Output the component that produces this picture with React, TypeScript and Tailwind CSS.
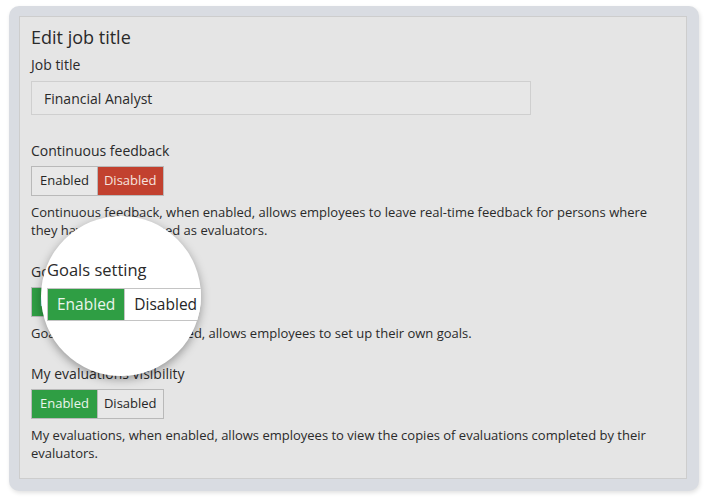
import React from 'react';

type ToggleProps = {
  value: 'on' | 'off';
};

const Toggle: React.FC<ToggleProps> = ({ value }) => (
  <div className="flex h-[30px] w-fit border border-[#b9b9b9] text-[13px]">
    <div
      className={`flex items-center px-[8px] ${
        value === 'on' ? 'bg-[#2f9e44] text-[#eaf5ec]' : 'bg-[#e8e8e8] text-[#262626]'
      }`}
    >
      Enabled
    </div>
    <div
      className={`flex items-center border-l border-[#b9b9b9] px-[6px] ${
        value === 'off' ? 'bg-[#c2412f] text-[#f6e3df]' : 'bg-[#e8e8e8] text-[#262626]'
      }`}
    >
      Disabled
    </div>
  </div>
);

const Setting: React.FC<{ label: string; value: 'on' | 'off'; text: string; className?: string }> = ({
  label,
  value,
  text,
  className,
}) => (
  <div className={className}>
    <div className="text-[14px] leading-[20px]">{label}</div>
    <div className="mt-[5px]">
      <Toggle value={value} />
    </div>
    <p className="mt-[7px] pr-[16px] text-[13px] leading-[18px]">{text}</p>
  </div>
);

export default function App() {
  return (
    <div
      className="relative h-[501px] w-[706px] bg-white pl-[9px] pt-[6px] text-[#2a2a2a]"
      style={{ fontFamily: '"Open Sans", "Liberation Sans", sans-serif' }}
    >
      <div className="h-[485px] w-[690px] rounded-[10px] bg-[#d9dce2] p-[10px] shadow-[1px_2px_4px_rgba(0,0,0,0.12)]">
        <div className="h-[463px] w-[668px] border border-[#cdcdcd] bg-[#e5e5e5] pl-[11px] pr-[10px] pt-[8px]">
          <h1 className="text-[18px] leading-[24px]">Edit job title</h1>
          <div className="mt-[6px] text-[14px] leading-[20px]">Job title</div>
          <div className="mt-[6px] flex h-[34px] w-[500px] items-center border border-[#cfcfcf] bg-[#e7e7e7] pl-[12px] text-[14px]">
            Financial Analyst
          </div>

          <Setting
            className="mt-[26px]"
            label="Continuous feedback"
            value="off"
            text="Continuous feedback, when enabled, allows employees to leave real-time feedback for persons where they have been assigned as evaluators."
          />
          <Setting
            className="mt-[23px]"
            label="Goals setting"
            value="on"
            text="Goals setting, when enabled, allows employees to set up their own goals."
          />
          <Setting
            className="mt-[22px]"
            label="My evaluations visibility"
            value="on"
            text="My evaluations, when enabled, allows employees to view the copies of evaluations completed by their evaluators."
          />
        </div>
      </div>

      {/* magnifier */}
      <div className="absolute left-[41px] top-[216px] h-[160px] w-[160px] overflow-hidden rounded-full bg-white shadow-[0_3px_10px_rgba(0,0,0,0.35)]">
        <div className="absolute left-[6px] top-[43px] whitespace-nowrap text-[16.5px] leading-[22px]">
          Goals setting
        </div>
        <div className="absolute left-[6px] top-[72px] flex h-[33px] whitespace-nowrap border border-[#c4c4c4] text-[15.5px]">
          <div className="flex items-center bg-[#2f9e44] px-[9px] text-[#eaf5ec]">Enabled</div>
          <div className="flex items-center border-l border-[#c4c4c4] bg-white px-[9px] text-[#262626]">
            Disabled
          </div>
        </div>
      </div>
    </div>
  );
}
